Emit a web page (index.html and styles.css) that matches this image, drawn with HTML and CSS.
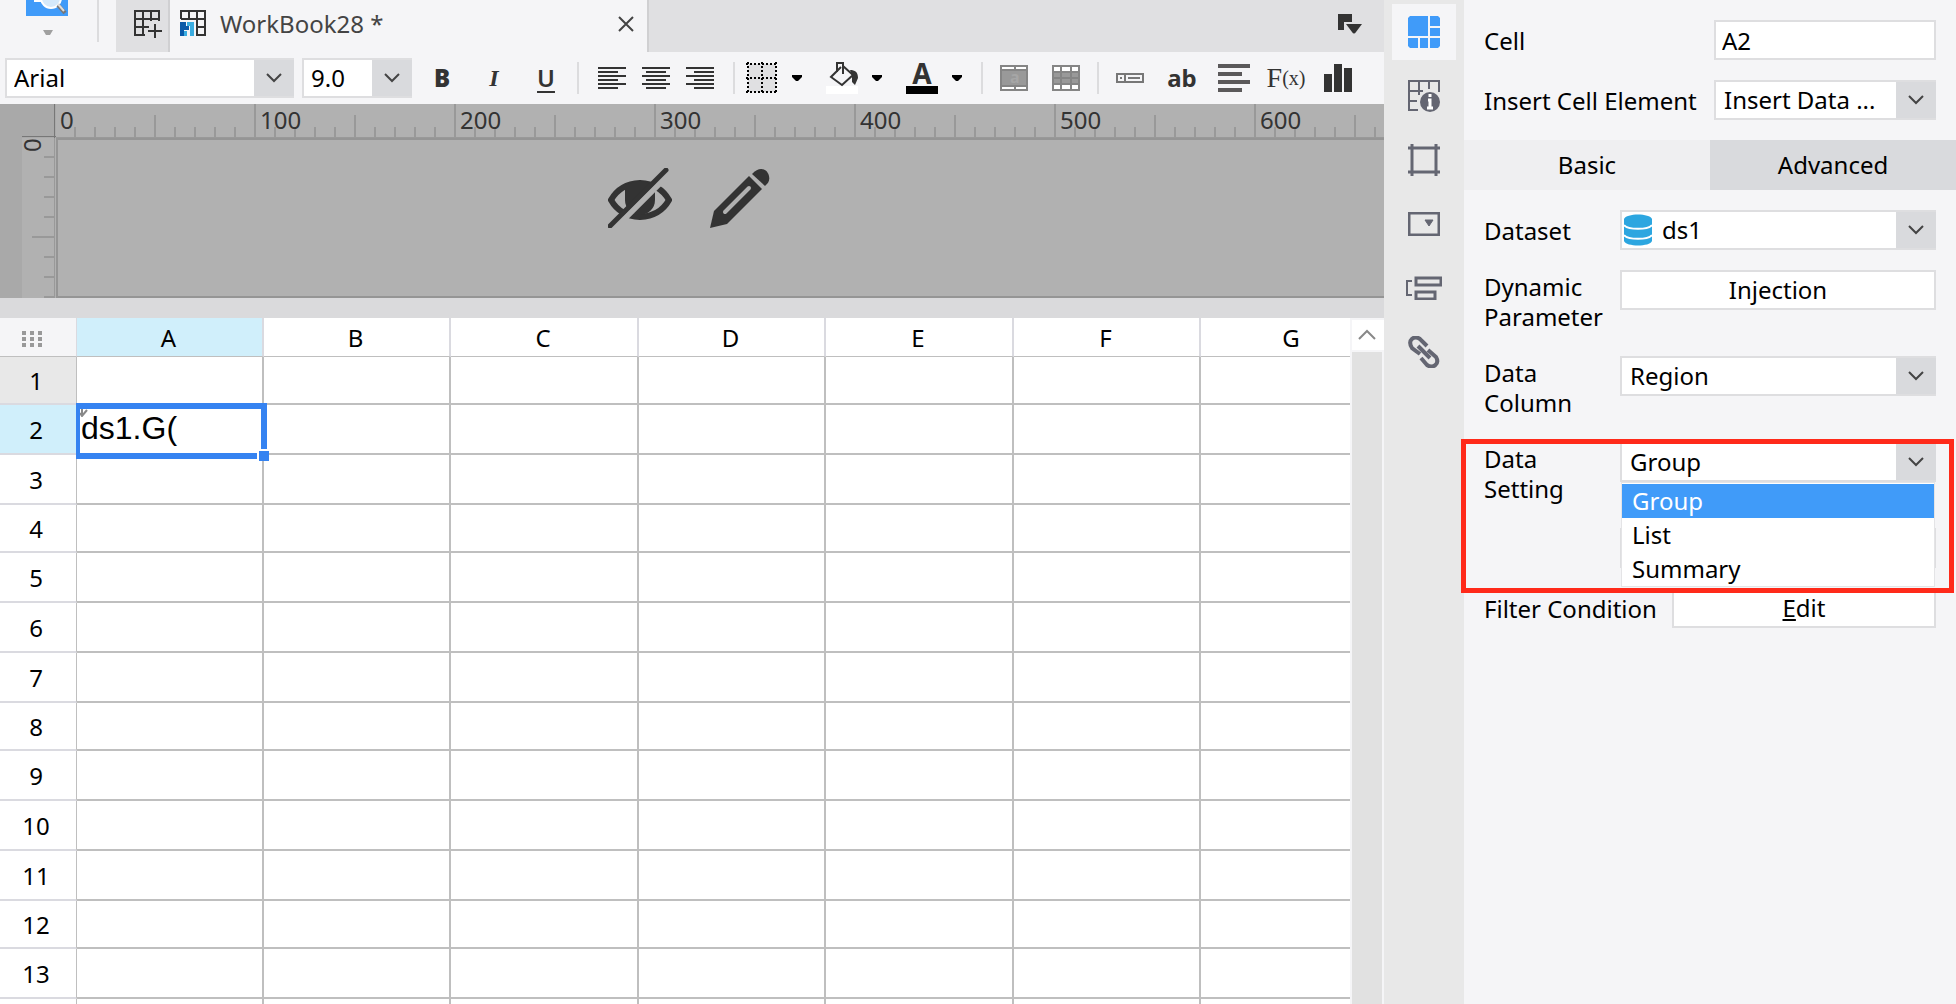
FILE: index.html
```html
<!DOCTYPE html>
<html lang="en">
<head>
    <meta charset="UTF-8">
    <meta name="viewport" content="width=device-width, initial-scale=1.0">
    <title>WorkBook28</title>
    <link rel="stylesheet" href="styles.css">
</head>
<body>
    <!-- shared shapes -->
    <svg class="defs" width="0" height="0">
        <symbol id="chevron" viewBox="0 0 18 12"><path d="M2 2l7 7 7-7" fill="none" stroke="#444" stroke-width="2"/></symbol>
        <symbol id="caret" viewBox="0 0 10 6"><path d="M0 0h10v2L6 6H4L0 2z"/></symbol>
    </svg>

    <main class="workspace">
        <header class="tab-bar">
            <button class="preview-btn" aria-label="Preview">
                <svg width="42" height="36" viewBox="0 0 42 36">
                    <path d="M0 0h42v16H0z" fill="#409bf9"/>
                    <path d="M8 0h10v2H8z" fill="#fff"/>
                    <circle cx="25" cy="-2" r="10" fill="#d5e9fa" stroke="#fff" stroke-width="2"/>
                    <path d="M32 5l7 8" stroke="#777" stroke-width="4"/><path d="M32 4l6 7" stroke="#ddd" stroke-width="2"/>
                    <path d="M17 30h10l-3 5h-4z" fill="#a0a0a0"/>
                </svg>
            </button>
            <button class="new-btn" aria-label="New workbook">
                <svg width="30" height="30" viewBox="0 0 30 30" fill="none" stroke="#333" stroke-width="2">
                    <path d="M26 12V2H2v24h10M2 10h24M2 18h14M10 2v24M18 2v10M22 15v14M15 22h14"/>
                </svg>
            </button>
            <div class="tab">
                <svg width="28" height="30" viewBox="0 0 28 30">
                    <path d="M2 10V2h24v24h-8V10H2M10 2v8M18 2v8M2 10h24M18 18h8" fill="none" stroke="#333" stroke-width="2"/>
                    <path d="M1 13h6v4h3v4H5v6H1z" fill="#0a59a8"/><path d="M8 13h7v14h-4V17H8zM5 22h3v5H5z" fill="#3aace0"/>
                </svg>
                <span class="tab-name">WorkBook28 *</span>
                <button class="tab-close" aria-label="Close">
                    <svg width="16" height="16" viewBox="0 0 16 16"><path d="M1 1l14 14M15 1L1 15" stroke="#444" stroke-width="2"/></svg>
                </button>
            </div>
            <button class="tab-menu" aria-label="Tab list">
                <svg width="24" height="20" viewBox="0 0 24 20" fill="#333"><path d="M0 0h14v8H6v8H0z"/><path d="M8 10h16l-6 8q-2 3-4 0z"/></svg>
            </button>
        </header>

        <div class="toolbar">
            <div class="combo font-combo">
                <select aria-label="Font"><option>Arial</option></select>
                <svg class="chev"><use href="#chevron"/></svg>
            </div>
            <div class="combo size-combo">
                <select aria-label="Font size"><option>9.0</option></select>
                <svg class="chev"><use href="#chevron"/></svg>
            </div>
            <div class="group format">
                <button class="wide bold">B</button>
                <button class="wide italic">I</button>
                <button class="wide underline">U</button>
            </div>
            <span class="sep"></span>
            <div class="group align">
                <button aria-label="Left"><svg width="28" height="22"><path d="M0 1h28M0 5h20M0 9h28M0 13h20M0 17h28M0 21h20"/></svg></button>
                <button aria-label="Center"><svg width="28" height="22"><path d="M0 1h28M4 5h20M0 9h28M4 13h20M0 17h28M4 21h20"/></svg></button>
                <button aria-label="Right"><svg width="28" height="22"><path d="M0 1h28M8 5h20M0 9h28M8 13h20M0 17h28M8 21h20"/></svg></button>
            </div>
            <span class="sep"></span>
            <div class="group paint">
                <div class="split">
                    <button aria-label="Border">
                        <svg width="32" height="32"><path d="M2 2h28v28H2z" fill="#e0e0e2"/><path d="M0 2h32M0 16h32M0 30h32M2 0v32M16 0v32M30 0v32" stroke="#000" stroke-width="2" stroke-dasharray="2 2"/></svg>
                    </button>
                    <button class="more" aria-label="Border options"><svg width="10" height="6"><use href="#caret"/></svg></button>
                </div>
                <div class="split">
                    <button aria-label="Fill">
                        <svg width="32" height="32"><path d="M0 24h32v8H0z" fill="#fff"/><path d="M11 10V1h6v11M17 4l10 9L16 23 5 15 15 5" fill="none" stroke="#333" stroke-width="2"/><path d="M24 8c5 0 8 2 8 8l-3 7-3-3v-6z" fill="#333"/></svg>
                    </button>
                    <button class="more" aria-label="Fill options"><svg width="10" height="6"><use href="#caret"/></svg></button>
                </div>
                <div class="split">
                    <button class="font-color" aria-label="Font color"><b>A</b></button>
                    <button class="more" aria-label="Font color options"><svg width="10" height="6"><use href="#caret"/></svg></button>
                </div>
            </div>
            <span class="sep"></span>
            <div class="group">
                <button class="wide" aria-label="Merge cells">
                    <svg width="28" height="26"><path d="M0 0h28v26H0z" fill="#858585"/><path d="M2 6h24v14H2z" fill="#999"/><path d="M2 2h12v2H2zM16 2h10v2H16zM2 22h12v2H2zM16 22h10v2H16z" fill="#fff"/><text x="10" y="18" font-size="16" font-weight="bold" fill="#a6a6a6">a</text></svg>
                </button>
                <button class="wide" aria-label="Unmerge cells">
                    <svg width="28" height="26"><path d="M0 0h28v26H0z" fill="#858585"/><path d="M2 2h6v4H2zM10 2h8v4h-8zM20 2h6v4h-6zM2 20h6v4H2zM10 20h8v4h-8zM20 20h6v4h-6z" fill="#fff"/><path d="M2 8h6v4H2zM10 8h8v4h-8zM20 8h6v4h-6zM2 14h6v4H2zM10 14h8v4h-8zM20 14h6v4h-6z" fill="#999"/></svg>
                </button>
            </div>
            <span class="sep"></span>
            <div class="group">
                <button class="wide" aria-label="Widget"><svg width="28" height="10" fill="none" stroke="#777" stroke-width="2"><path d="M1 1h26v8H1zM9 1v8M4 5h2M12 5h12"/></svg></button>
                <button class="wide text-tool">ab</button>
                <button class="wide" aria-label="Rich text"><svg width="32" height="28" stroke="#5b595a" stroke-width="4"><path d="M0 2h32M0 10h24M0 18h32M0 26h24"/></svg></button>
                <button class="wide formula">F<small>(x)</small></button>
                <button class="wide" aria-label="Chart"><svg width="28" height="28" fill="#333"><path d="M0 10h8v18H0zM10 0h8v28h-8zM20 4h8v24h-8z"/></svg></button>
            </div>
        </div>

        <section class="param-pane">
            <div class="corner"></div>
            <div class="ruler-x">
                <span>0</span><span>100</span><span>200</span><span>300</span><span>400</span><span>500</span><span>600</span>
            </div>
            <div class="ruler-y"><span>0</span></div>
            <div class="canvas">
                <button aria-label="Hide">
                    <svg width="64" height="60" viewBox="0 0 64 60">
                        <path d="M3 32Q12 16 32 15Q52 16 61 32Q52 48 32 49Q12 48 3 32z" fill="none" stroke="#333" stroke-width="6"/>
                        <path d="M17 18Q32 9 47 18V32a15 15 0 0 1-30 0z" fill="#333"/>
                        <path d="M6 61L64 3" stroke="#b1b1b1" stroke-width="6"/>
                        <path d="M2 58L58 2" stroke="#333" stroke-width="5" stroke-linecap="round"/>
                    </svg>
                </button>
                <button aria-label="Edit">
                    <svg width="60" height="60" viewBox="0 0 60 60" fill="#333">
                        <path d="M0 60l4-17L39 8l13 13L17 56z"/>
                        <path d="M42 6c7-8 15-6 17 2 1 5-1 7-4 10z"/>
                        <path d="M15 44L39 20" stroke="#b1b1b1" stroke-width="4" stroke-linecap="round"/>
                    </svg>
                </button>
            </div>
        </section>

        <section class="sheet">
            <div class="sheet-scroll">
                <table>
                    <thead>
                        <tr>
                            <th class="select-all" aria-label="Select all"><svg width="20" height="16" fill="#999"><path d="M0 0h4v4H0zM8 0h4v4H8zM16 0h4v4h-4zM0 6h4v4H0zM8 6h4v4H8zM16 6h4v4h-4zM0 12h4v4H0zM8 12h4v4H8zM16 12h4v4h-4z"/></svg></th>
                            <th class="current">A</th><th>B</th><th>C</th><th>D</th><th>E</th><th>F</th><th>G</th>
                        </tr>
                    </thead>
                    <tbody id="sheet-body"></tbody>
                </table>
            </div>
            <div class="scrollbar">
                <button aria-label="Scroll up"><svg width="18" height="12" viewBox="0 0 18 12"><path d="M1 10l8-8 8 8" fill="none" stroke="#888" stroke-width="2"/></svg></button>
            </div>
        </section>
    </main>

    <nav class="rail">
        <button class="active" aria-label="Cell element"><svg width="32" height="32" fill="#409bf9"><path d="M2 0h18v20H0V2zM22 0h8l2 2v8H22zM22 12h10v8H22zM0 22h10v10H2l-2-2zM12 22h8v10h-8zM22 22h10v8l-2 2h-8z"/></svg></button>
        <button aria-label="Cell attributes"><svg width="32" height="32" fill="none" stroke="#646672" stroke-width="2"><path d="M31 12V1H1v29h9M1 11h14M1 21h8M11 1v14M21 1v8"/><circle cx="22" cy="22" r="10" fill="#646672" stroke="none"/><path d="M22 14v3M20 20h2v8M19 28h6" stroke="#fff" stroke-width="3"/></svg></button>
        <button aria-label="Float element"><svg width="32" height="32" fill="none" stroke="#646672" stroke-width="3"><path d="M0 4h32M0 28h32M4 0v32M28 0v32"/></svg></button>
        <button aria-label="Widget settings"><svg width="32" height="24" fill="none" stroke="#646672" stroke-width="3"><path d="M1 1h30v22H1z"/><path d="M17 8h8l-4 6z" fill="#646672" stroke-width="1"/></svg></button>
        <button aria-label="Condition attributes"><svg width="36" height="24" fill="none" stroke="#646672"><path d="M6 5H1v14h5" stroke-width="2"/><path d="M10 2h25v7H10zM10 16h19v7H10z" stroke-width="3"/></svg></button>
        <button aria-label="Hyperlink"><svg width="32" height="32" fill="none" stroke="#646672" stroke-width="4"><path d="M12 18L4 12C-1 4 6-1 12 3l7 7M20 14l8 7c4 7-3 12-9 8l-6-7M10 10l12 12"/></svg></button>
    </nav>

    <aside class="props">
        <div class="field">
            <label for="cell">Cell</label>
            <input id="cell" class="short" type="text" value="A2">
        </div>
        <div class="field">
            <label for="element">Insert Cell Element</label>
            <div class="combo short">
                <select id="element"><option>Insert Data ...</option></select>
                <svg class="chev"><use href="#chevron"/></svg>
            </div>
        </div>
        <div class="prop-tabs">
            <button>Basic</button>
            <button class="other">Advanced</button>
        </div>
        <div class="field">
            <label for="dataset">Dataset</label>
            <div class="combo long dataset">
                <svg class="db" width="28" height="32" viewBox="0 0 28 32">
                    <path d="M0 5C2-1 26-1 28 5v22c-2 6-26 6-28 0z" fill="#2ca6e0"/>
                    <path d="M0 11c4 5 24 5 28 0M0 21c4 5 24 5 28 0" fill="none" stroke="#fff" stroke-width="2"/>
                </svg>
                <select id="dataset"><option>ds1</option></select>
                <svg class="chev"><use href="#chevron"/></svg>
            </div>
        </div>
        <div class="field tall">
            <label for="param">Dynamic Parameter</label>
            <button id="param" class="long">Injection</button>
        </div>
        <div class="field tall">
            <label for="column">Data Column</label>
            <div class="combo long">
                <select id="column"><option>Region</option></select>
                <svg class="chev"><use href="#chevron"/></svg>
            </div>
        </div>
        <div class="field tall setting">
            <label for="setting">Data Setting</label>
            <div class="combo long">
                <select id="setting"><option>Group</option><option>List</option><option>Summary</option></select>
                <svg class="chev"><use href="#chevron"/></svg>
                <ul class="menu" role="listbox">
                    <li role="option" aria-selected="true">Group</li>
                    <li role="option">List</li>
                    <li role="option">Summary</li>
                </ul>
            </div>
            <div class="highlight"></div>
        </div>
        <div class="field">
            <input class="long" type="text" aria-label="Group mode">
        </div>
        <div class="field">
            <label for="filter">Filter Condition</label>
            <button id="filter" class="medium"><u>E</u>dit</button>
        </div>
    </aside>

    <script>
        const cells = { "2-0": "ds1.G(" };
        const current = "2-0";
        const lastRow = 13;
        let rows = "";
        // one extra unnumbered row runs under the bottom edge
        for (let r = 1; r <= lastRow + 1; r++) {
            rows += `<tr><th class="${r === 1 ? "hover" : r === 2 ? "current" : ""}">${r <= lastRow ? r : ""}</th>`;
            for (let c = 0; c < 7; c++) {
                const key = r + "-" + c;
                rows += key === current
                    ? `<td class="selected">${cells[key]}<svg class="expand" width="8" height="8"><path d="M2 0v7M0 4l2 3 5-6" fill="none" stroke="#888" stroke-width="2"/></svg><i class="outline"></i><i class="handle"></i></td>`
                    : `<td>${cells[key] || ""}</td>`;
            }
            rows += "</tr>";
        }
        document.getElementById("sheet-body").innerHTML = rows;
    </script>
</body>
</html>
```
FILE: styles.css
```css
* { box-sizing: border-box; }
body { margin: 0; height: 100vh; display: flex; overflow: hidden; background: #f5f5f7; color: #000; font-family: "Noto Sans", "Open Sans", sans-serif; font-size: 24px; line-height: 30px; }
button, input, select { font: inherit; color: inherit; margin: 0; padding: 0; border: none; background: none; border-radius: 0; }
button { display: flex; align-items: center; justify-content: center; cursor: pointer; }
svg { display: block; flex: none; }
.defs { position: absolute; }

.workspace { flex: 1; min-width: 0; display: flex; flex-direction: column; }

/* tabs */
.tab-bar { height: 52px; display: flex; background: #e0e0e2; flex: none; }
.preview-btn { width: 116px; padding: 0 48px 0 26px; background: #f5f5f7 linear-gradient(#dcdcde, #dcdcde) 97px 0 / 2px 42px no-repeat; align-items: flex-start; justify-content: flex-start; }
.new-btn { width: 54px; padding: 0 0 4px 12px; border-right: 2px solid #d0d0d2; }
.tab { width: 479px; display: flex; align-items: center; padding: 0 13px 4px 9px; background: #f5f5f7; border-right: 2px solid #d0d0d2; }
.tab-name { flex: 1; padding-left: 13px; color: #444; }
.tab-menu { margin-left: auto; padding: 0 22px 4px 0; }

/* toolbar */
.toolbar { height: 52px; display: flex; align-items: center; padding-left: 5px; flex: none; }
.combo { position: relative; height: 40px; }
.combo select { appearance: none; width: 100%; height: 40px; padding: 0 48px 0 8px; background: linear-gradient(#d9dadd, #d9dadd) right / 40px 100% no-repeat #fff; border: 2px solid #dedee0; border-right: none; }
.chev { position: absolute; right: 11px; top: 14px; width: 18px; height: 12px; pointer-events: none; }
.font-combo { width: 289px; margin-right: 8px; }
.size-combo { width: 110px; }
.toolbar select { padding-left: 7px; }
.group { display: flex; align-items: center; }
.group button { width: 44px; height: 40px; color: #333; }
.group .wide { width: 52px; }
.format { padding-left: 4px; }
.bold { font-weight: 900; }
.italic { font-family: "Liberation Serif", serif; font-style: italic; font-weight: bold; }
.underline { text-decoration: underline; text-underline-offset: 4px; font-weight: 600; }
.sep { width: 2px; height: 32px; margin: 0 5px; background: #dcdcde; }
.align { padding: 0 6px; }
.align svg { stroke: #333; stroke-width: 2; }
.paint { gap: 10px; padding-right: 6px; }
.split { display: flex; align-items: center; }
.group .more { width: 26px; }
.font-color b { width: 32px; height: 32px; line-height: 22px; font-size: 28px; border-bottom: 8px solid #000; }
.text-tool { font-weight: bold; }
.group .formula { font-family: "Liberation Serif", serif; font-size: 28px; }
.formula small { font-size: 20px; }

/* parameter pane */
.param-pane { display: grid; grid-template: 34px 160px / 56px 1fr; border-bottom: 20px solid #dadadc; box-sizing: content-box; background: #b1b1b1; flex: none; overflow: hidden; color: #333; }
.corner { width: 56px; background: linear-gradient(#777, #777) 54px 0 / 1px 34px no-repeat, linear-gradient(#777, #777) 22px 32px / 34px 1px no-repeat, #a9a9a9; }
.ruler-x { display: flex; overflow: hidden; border-bottom: 1px solid #999;
    background: repeating-linear-gradient(90deg, transparent 0 198px, #999 198px 200px) 0 0 / auto 34px,
        repeating-linear-gradient(90deg, transparent 0 98px, #999 98px 100px) 0 11px / auto 34px no-repeat,
        repeating-linear-gradient(90deg, transparent 0 18px, #999 18px 20px) 0 23px / auto 34px no-repeat; }
.ruler-x span { flex: 0 0 200px; padding-left: 4px; line-height: 32px; }
.ruler-y { background: linear-gradient(#999, #999) 32px 98px / 22px 2px no-repeat, repeating-linear-gradient(transparent 0 18px, #999 18px 20px) 44px 0 / 10px 160px no-repeat, linear-gradient(#999, #999) 54px 0 / 1px 160px no-repeat, linear-gradient(90deg, #a9a9a9 22px, #b1b1b1 22px); }
.ruler-y span { display: block; width: 32px; height: 14px; margin-left: 16px; line-height: 32px; writing-mode: vertical-rl; transform: rotate(180deg); }
.canvas { display: flex; justify-content: center; align-items: flex-start; gap: 38px; padding: 28px 64px 0 0; border: 2px solid #959595; border-right: none; }

/* sheet */
.sheet { flex: 1; min-height: 0; display: flex; background: #fff; }
.sheet-scroll { flex: 1; min-width: 0; overflow: hidden; }
table { table-layout: fixed; width: 1385px; border-collapse: separate; border-spacing: 0; }
th { font-weight: normal; padding: 2px 0 0; text-align: center; }
thead th { width: 187px; height: 39px; border-right: 2px solid #dadae0; border-bottom: 1px solid #bfbfbf; padding-right: 2px; }
thead th:nth-child(4), thead th:nth-child(6) { width: 188px; }
thead th:last-child { width: 184px; }
.select-all { background: #f5f5f7; }
.select-all svg { margin: 2px 0 0 22px; }
tbody th { height: 50px; border-right: 1px solid #bfbfbf; border-bottom: 2px solid #dadae0; padding-right: 4px; }
thead th:first-child { width: 77px; border-right-width: 1px; }
tbody tr:first-child th, tbody tr:nth-child(4n) th { height: 48px; }
td { padding: 0; border-right: 2px solid #bfbfbf; border-bottom: 2px solid #bfbfbf; }
th.current { background: #d0effb; }
th.hover { background: #e8e8e8; }
.selected { position: relative; padding: 0 0 2px 4px; font: 32px/32px "Liberation Sans", Arial, sans-serif; }
.outline { position: absolute; left: -1px; top: -2px; right: -5px; bottom: -6px; border: 6px solid #3583f1; border-left-width: 4px; }
.handle { position: absolute; right: -7px; bottom: -8px; width: 12px; height: 12px; background: #3583f1; border: solid #fff; border-width: 2px 0 0 2px; }
.expand { position: absolute; left: 3px; top: 4px; }
.scrollbar { width: 34px; border: 2px solid #f5f5f7; border-right: none; border-bottom: none; background: #e1e1e1; box-shadow: inset -2px 0 #f5f5f7; }
.scrollbar button { width: 100%; height: 32px; padding-right: 2px; background: #fff; border-bottom: 2px solid #f5f5f7; }

/* icon rail */
.rail { width: 80px; padding: 4px 8px; display: flex; flex-direction: column; gap: 8px; background: #e8e8e8; }
.rail button { width: 64px; height: 56px; }
.rail .active { background: #f5f5f7; }

/* cell properties */
.props { width: 492px; padding: 20px; display: flex; flex-direction: column; gap: 20px; }
.field { display: flex; justify-content: space-between; align-items: flex-start; height: 40px; }
.field label { line-height: 42px; white-space: nowrap; }
.tall { height: 66px; }
.tall label { width: 110px; padding-top: 2px; line-height: 30px; white-space: normal; }
.field > input, .field > button { height: 40px; background: #fff; border: 2px solid #dedee0; padding: 0 6px; }
.field .short { width: 222px; }
.field .medium { width: 264px; }
.field .long { width: 316px; margin-left: auto; }
.dataset select { padding-left: 40px; }
.db { position: absolute; left: 4px; top: 4px; }
.prop-tabs { display: flex; margin: 0 -20px; }
.prop-tabs button { flex: 1; height: 50px; background: #efeff1; }
.prop-tabs .other { background: #d9dadd; }
.setting { position: relative; }
.menu { position: absolute; z-index: 1; left: 1px; right: 1px; top: 40px; margin: 0; padding: 1px 0 0; list-style: none; background: #fff; border: 1px solid #e4e4e6; }
.menu li { height: 34px; padding-left: 10px; line-height: 34px; }
.menu li[aria-selected="true"] { background: #409bf9; color: #fff; }
.highlight { position: absolute; z-index: 2; left: -23px; right: -18px; top: -3px; height: 154px; border: 5px solid #ff2a1a; pointer-events: none; }
```
